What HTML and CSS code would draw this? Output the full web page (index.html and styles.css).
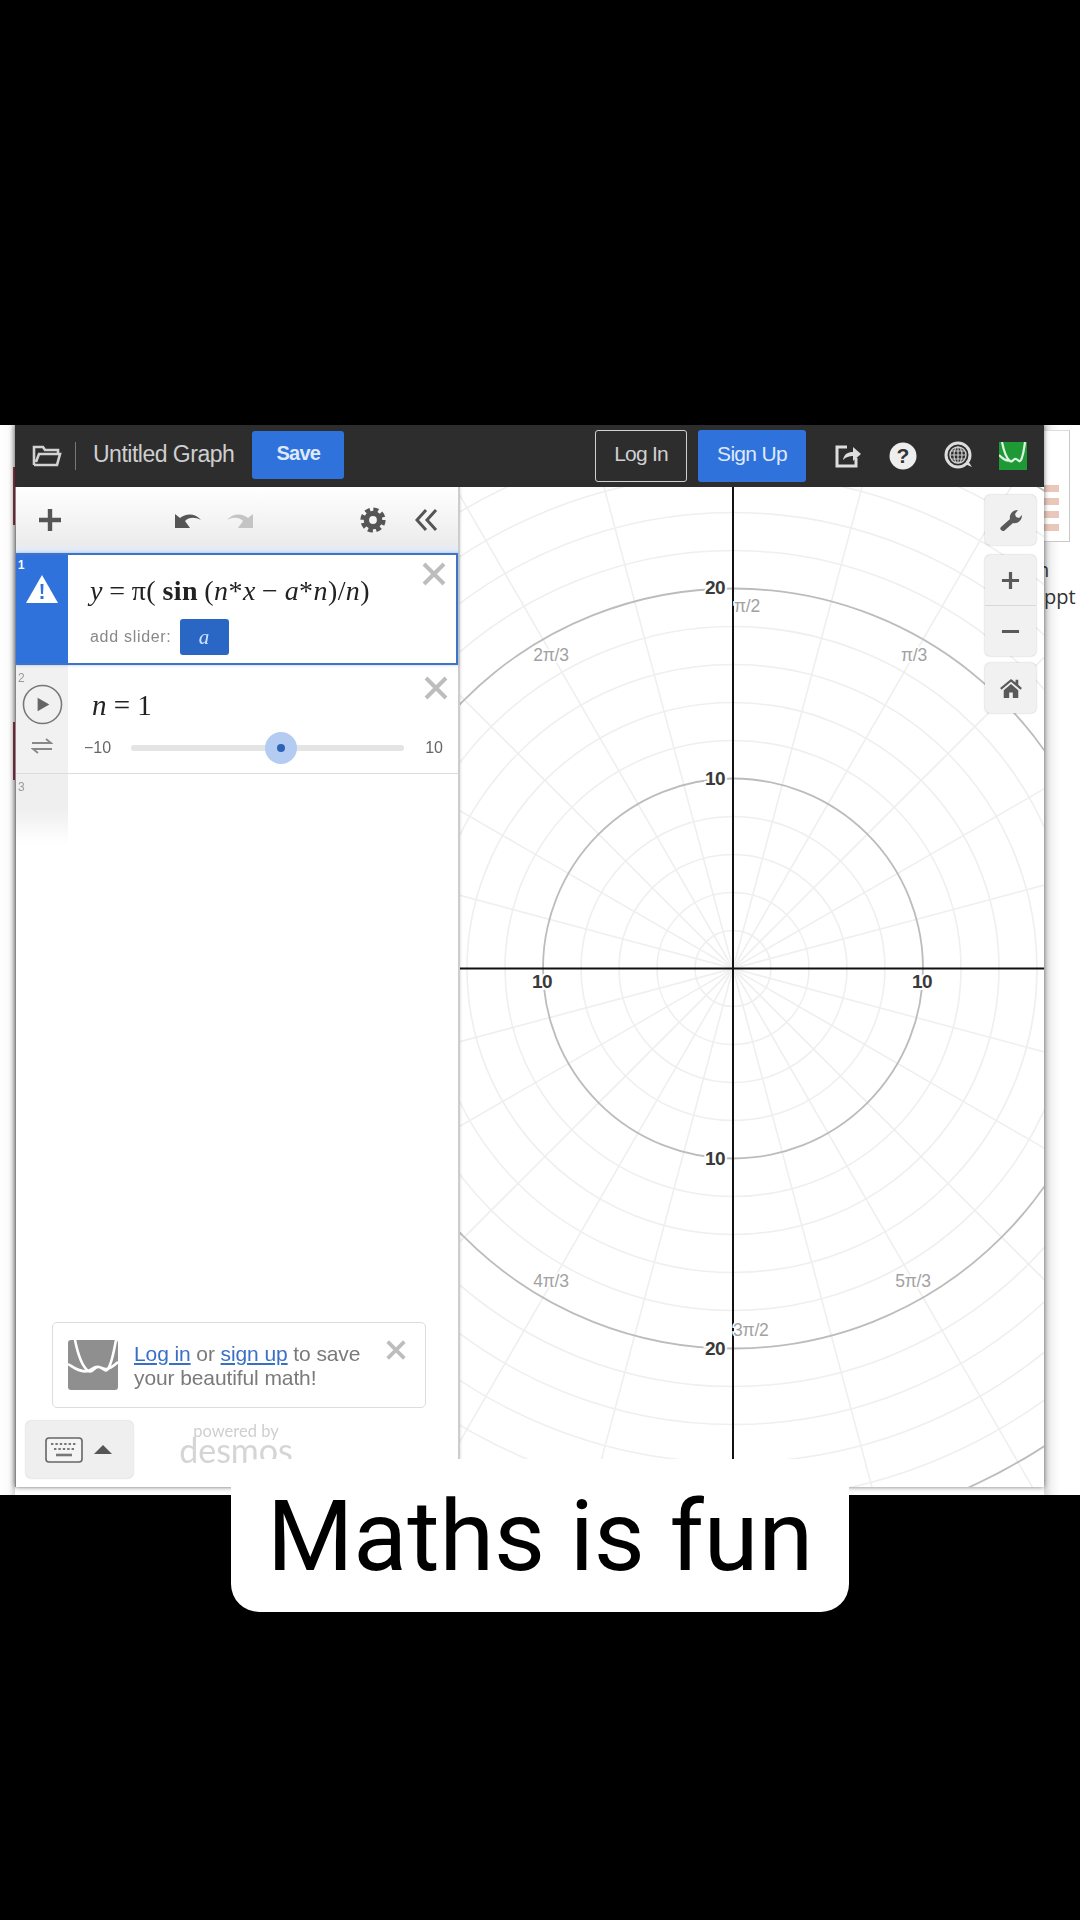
FILE: index.html
```html
<!DOCTYPE html>
<html lang="en">
<head>
<meta charset="utf-8">
<title>Maths is fun</title>
<link rel="stylesheet" href="styles.css">
</head>
<body>
<main class="screen">
  <div class="top-bar"></div>
  <section class="video">
    <div class="left-edge"><i class="tick tick-a"></i><i class="tick tick-b"></i></div>
    <div class="window">
      <header class="header">
        <svg class="ic-folder" viewBox="0 0 32 24"><path d="M3 21V3h9l2 3h13v4M3 21h23l3-11H8L5 18" fill="none" stroke="#d2d2d2" stroke-width="2.6"/></svg>
        <span class="sep"></span>
        <span class="title">Untitled Graph</span>
        <button class="btn btn-save">Save</button>
        <span class="grow"></span>
        <button class="btn btn-login">Log In</button>
        <button class="btn btn-signup">Sign Up</button>
        <svg class="ic-head ic-share" viewBox="0 0 28 26"><path d="M13 4H3v19h19v-8" fill="none" stroke="#ddd" stroke-width="3"/><path d="M9 17c1-6 5-8 10-8V4l8 7-8 7v-5c-4 0-7 1-10 4z" fill="#ddd"/></svg>
        <svg class="ic-head ic-help" viewBox="0 0 28 28"><circle cx="14" cy="14" r="13.5" fill="#eee"/><text x="14" y="21" text-anchor="middle" class="help-q">?</text></svg>
        <svg class="ic-head ic-globe" viewBox="0 0 30 30"><circle cx="14" cy="14" r="12" fill="none" stroke="#ddd" stroke-width="3"/><circle cx="14" cy="14" r="8" fill="none" stroke="#ccc" stroke-width="1.4"/><ellipse cx="14" cy="14" rx="4" ry="8" fill="none" stroke="#ccc" stroke-width="1.2"/><path d="M6 14h16M7 10h14M7 18h14M14 6v16" stroke="#ccc" stroke-width="1.2"/><path d="M21 23l7 3-4-6z" fill="#ddd"/></svg>
        <svg class="ic-head ic-logo" viewBox="0 0 28 28"><rect width="28" height="28" fill="#1d9a35"/><path d="M3 0c2 10 4 16 8 19 3 2 3-3 6-2 3 1 3 4 5 1 2-4 3-10 4-18M0 13c3 3 7 7 11 5" fill="none" stroke="#dff5e2" stroke-width="2.2"/></svg>
      </header>
      <div class="workspace">
        <aside class="panel">
          <div class="toolbar">
            <svg class="ic-plus" viewBox="0 0 24 24"><path d="M12 1v22M1 12h22" stroke="#555" stroke-width="4.4"/></svg>
            <svg class="ic-undo" viewBox="0 0 30 20"><path d="M2 18V4l5 4c6-5 15-5 21 2-6-3-12-3-16 1l5 7z" fill="#555"/></svg>
            <svg class="ic-undo ic-redo" viewBox="0 0 30 20"><path d="M28 18V4l-5 4C17 3 8 3 2 10c6-3 12-3 16 1l-5 7z" fill="#c4c4c4"/></svg>
            <span class="grow"></span>
            <svg class="ic-gear" viewBox="0 0 26 26"><circle cx="13" cy="13" r="6.6" fill="none" stroke="#555" stroke-width="5.4"/><circle cx="13" cy="13" r="10.6" fill="none" stroke="#555" stroke-width="4" stroke-dasharray="5 3.33"/></svg>
            <svg class="ic-collapse" viewBox="0 0 24 22"><path d="M11 1L2 11l9 10M21 1l-9 10 9 10" fill="none" stroke="#555" stroke-width="3"/></svg>
          </div>
          <div class="expr expr-active">
            <div class="gutter gutter-blue">
              <span class="num num-w">1</span>
              <svg class="ic-warn" viewBox="0 0 34 30"><path d="M17 1l16 28H1z" fill="#fff"/><path d="M15.5 10h3l-.5 10h-2zM15.500 22h3v3h-3z" fill="#2f72dc"/></svg>
            </div>
            <div class="expr-body">
              <div class="math math-1"><i>y</i> = π( <b>sin</b> (<i>n</i>*<i>x</i> − <i>a</i>*<i>n</i>)/<i>n</i>)</div>
              <div class="slider-hint"><span>add slider:</span><button class="add-a">a</button></div>
            </div>
            <svg class="ic-x" viewBox="0 0 24 24"><path d="M2 2l20 20M22 2L2 22" stroke="#bdbdbd" stroke-width="4"/></svg>
          </div>
          <div class="expr expr-slider">
            <div class="gutter">
              <span class="num">2</span>
              <svg class="ic-play" viewBox="0 0 42 42"><circle cx="21" cy="21" r="19.5" fill="none" stroke="#777" stroke-width="1.6"/><path d="M16 14l12 7-12 7z" fill="#666"/></svg>
              <svg class="ic-loop" viewBox="0 0 22 18"><path d="M1 6h19l-5-4M21 12H2l5 4" fill="none" stroke="#888" stroke-width="1.8"/></svg>
            </div>
            <div class="expr-body">
              <div class="math math-2"><i>n</i> = 1</div>
              <div class="slider-row">
                <span class="limit">−10</span>
                <div class="track"><span class="thumb"><span class="dot"></span></span></div>
                <span class="limit">10</span>
              </div>
            </div>
            <svg class="ic-x ic-x2" viewBox="0 0 24 24"><path d="M2 2l20 20M22 2L2 22" stroke="#bdbdbd" stroke-width="4"/></svg>
          </div>
          <div class="expr-empty">
            <div class="gutter gutter-fade"><span class="num">3</span></div>
          </div>
          <div class="banner">
            <svg class="ic-banner" viewBox="0 0 50 50"><rect width="50" height="50" rx="3" fill="#8f8f8f"/><path d="M7 0c3 15 7 26 13 31 5 3 6-5 11-4 5 1 6 6 9 2 4-6 6-18 8-29M0 24c5 3 12 9 20 7 5-2 6-5 11-4s7 6 19-5" fill="none" stroke="#fff" stroke-width="2.6"/></svg>
            <p class="banner-text"><a href="#">Log in</a> or <a href="#">sign up</a> to save<br>your beautiful math!</p>
            <svg class="ic-x ic-x3" viewBox="0 0 24 24"><path d="M2 2l20 20M22 2L2 22" stroke="#bdbdbd" stroke-width="4.4"/></svg>
          </div>
          <div class="footer">
            <div class="kbd-btn">
              <svg class="ic-kbd" viewBox="0 0 38 26"><rect x="1" y="1" width="36" height="24" rx="3" fill="#f4f4f4" stroke="#666" stroke-width="1.6"/><path d="M6 7h26M9 12h20" stroke="#777" stroke-width="2" stroke-dasharray="2.4 2"/><path d="M11 18h16" stroke="#777" stroke-width="2.6"/></svg>
              <span class="caret"></span>
            </div>
            <div class="powered"><span class="pw-top">powered by</span><span class="pw-name">desmos</span></div>
          </div>
        </aside>
        <div class="graph">
          <svg class="plane" viewBox="0 0 585 1000">
            <g class="minor">
              <circle cx="273" cy="481.5" r="38"/><circle cx="273" cy="481.5" r="76"/><circle cx="273" cy="481.5" r="114"/><circle cx="273" cy="481.5" r="152"/>
              <circle cx="273" cy="481.5" r="228"/><circle cx="273" cy="481.5" r="266"/><circle cx="273" cy="481.5" r="304"/><circle cx="273" cy="481.5" r="342"/>
              <circle cx="273" cy="481.5" r="418"/><circle cx="273" cy="481.5" r="456"/><circle cx="273" cy="481.5" r="494"/><circle cx="273" cy="481.5" r="532"/>
              <circle cx="273" cy="481.5" r="608"/><circle cx="273" cy="481.5" r="646"/>
              <g class="spokes">
                <line x1="-500" y1="481.5" x2="1046" y2="481.5" transform="rotate(15 273 481.5)"/>
                <line x1="-500" y1="481.5" x2="1046" y2="481.5" transform="rotate(30 273 481.5)"/>
                <line x1="-500" y1="481.5" x2="1046" y2="481.5" transform="rotate(45 273 481.5)"/>
                <line x1="-500" y1="481.5" x2="1046" y2="481.5" transform="rotate(60 273 481.5)"/>
                <line x1="-500" y1="481.5" x2="1046" y2="481.5" transform="rotate(75 273 481.5)"/>
                <line x1="-500" y1="481.5" x2="1046" y2="481.5" transform="rotate(105 273 481.5)"/>
                <line x1="-500" y1="481.5" x2="1046" y2="481.5" transform="rotate(120 273 481.5)"/>
                <line x1="-500" y1="481.5" x2="1046" y2="481.5" transform="rotate(135 273 481.5)"/>
                <line x1="-500" y1="481.5" x2="1046" y2="481.5" transform="rotate(150 273 481.5)"/>
                <line x1="-500" y1="481.5" x2="1046" y2="481.5" transform="rotate(165 273 481.5)"/>
              </g>
            </g>
            <g class="major">
              <circle cx="273" cy="481.5" r="190"/><circle cx="273" cy="481.5" r="380"/><circle cx="273" cy="481.5" r="570"/>
            </g>
            <path class="axis" d="M0 481.5H585M273 0V1000"/>
            <g class="nums">
              <text x="255" y="107" text-anchor="middle">20</text>
              <text x="255" y="298" text-anchor="middle">10</text>
              <text x="82" y="501" text-anchor="middle">10</text>
              <text x="462" y="501" text-anchor="middle">10</text>
              <text x="255" y="678" text-anchor="middle">10</text>
              <text x="255" y="868" text-anchor="middle">20</text>
            </g>
            <g class="angles">
              <text x="274" y="125">π/2</text>
              <text x="91" y="174" text-anchor="middle">2π/3</text>
              <text x="454" y="174" text-anchor="middle">π/3</text>
              <text x="91" y="800" text-anchor="middle">4π/3</text>
              <text x="453" y="800" text-anchor="middle">5π/3</text>
              <text x="273" y="849">3π/2</text>
            </g>
          </svg>
          <div class="graph-tools">
            <div class="tool tool-single"><svg class="ic-wrench" viewBox="0 0 24 24"><path d="M2 22c-1-1-1-2 0-3l9-8c-1-4 2-9 8-9l-3 4 1 3 3 1 3-3c0 6-5 9-9 8l-9 8c-1 0-2 0-3-1z" fill="#5a5a5a"/></svg></div>
            <div class="tool-group">
              <div class="tool tool-half"><svg class="ic-zoom" viewBox="0 0 20 20"><path d="M10 1v18M1 10h18" stroke="#5a5a5a" stroke-width="3.4"/></svg></div>
              <div class="tool tool-half"><svg class="ic-zoom" viewBox="0 0 20 20"><path d="M1 10h18" stroke="#5a5a5a" stroke-width="3.4"/></svg></div>
            </div>
            <div class="tool tool-single"><svg class="ic-home" viewBox="0 0 24 22"><path d="M12 1L0 11l1.500 2L12 4l10.500 9L24 11l-4-3.500V2h-3v3zM4 13.500V22h6v-6h4v6h6v-8.500L12 6.500z" fill="#5a5a5a"/></svg></div>
          </div>
        </div>
      </div>
    </div>
    <div class="beyond">
      <div class="paper"><i></i><i></i><i></i><i></i></div>
      <p class="beyond-text"><span class="clip-n">n</span><br>ppt</p>
    </div>
  </section>
  <div class="bottom-bar"></div>
</main>
<div class="caption">Maths is fun</div>
</body>
</html>
```

FILE: styles.css
```css
* { box-sizing: border-box; }
html, body { margin: 0; padding: 0; }
body { width: 1080px; height: 1920px; background: #000; overflow: hidden; position: relative; font-family: "Liberation Sans", Arial, sans-serif; }
.screen { display: flex; flex-direction: column; height: 1920px; }
.top-bar { height: 425px; background: #000; }
.bottom-bar { flex: 1; background: #000; }
.video { height: 1070px; display: flex; background: #fff; align-items: flex-start; }

.left-edge { width: 15px; height: 1070px; position: relative; background: linear-gradient(90deg, #fff 0, #fafafa 60%, #d8d8d8 100%); }
.tick { position: absolute; right: 0; width: 2px; background: #8a2f45; }
.tick-a { top: 42px; height: 58px; }
.tick-b { top: 297px; height: 58px; }

.window { width: 1029px; height: 1062px; display: flex; flex-direction: column; background: #fff; box-shadow: 0 0 5px rgba(0,0,0,.55); filter: blur(.5px); position: relative; z-index: 1; }
.grow { flex: 1; }

.header { height: 62px; background: #2d2d2d; display: flex; align-items: center; padding: 0 17px 0 16px; flex: none; }
.ic-folder { width: 32px; height: 24px; margin-left: 0; }
.sep { width: 1px; height: 28px; background: #777; margin: 0 17px 0 12px; }
.title { color: #cfcfcf; font-size: 23px; letter-spacing: -.5px; margin: -4px 18px 0 0; }
.btn { font-family: inherit; border: 0; color: #fff; font-size: 21px; letter-spacing: -.5px; padding: 0 0 4px; border-radius: 3px; font-weight: 400; }
.btn-save { width: 92px; height: 48px; margin-top: -3px; padding: 0 0 2px; background: #2f72dc; font-weight: 700; color: #dfe9fb; font-size: 20px; letter-spacing: -.8px; }
.btn-login { width: 92px; height: 52px; background: transparent; border: 1.5px solid #cfcfcf; color: #d0d0d0; margin-right: 11px; letter-spacing: -.8px; }
.btn-signup { width: 108px; height: 52px; background: #2f72dc; color: #dfe9fb; margin-right: 28px; letter-spacing: -.7px; }
.ic-head { flex: none; }
.ic-share { width: 28px; height: 26px; margin-right: 27px; }
.ic-help { width: 28px; height: 28px; margin-right: 27px; }
.help-q { font: 700 21px "Liberation Sans", sans-serif; fill: #333; }
.ic-globe { width: 30px; height: 30px; margin-right: 25px; }
.ic-logo { width: 28px; height: 28px; }

.workspace { flex: 1; display: flex; min-height: 0; }
.panel { width: 445px; flex: none; display: flex; flex-direction: column; border-right: 2px solid #cdcdcd; box-shadow: 1px 0 2px rgba(0,0,0,.1); border-left: 1px solid #888; background: #fff; position: relative; z-index: 2; }

.toolbar { height: 66px; flex: none; display: flex; align-items: center; padding: 0 19px 0 22px; background: linear-gradient(#fff 0, #ececec 85%, #dfeafa 100%); }
.ic-plus { width: 24px; height: 24px; margin-right: 111px; }
.ic-undo { width: 30px; height: 20px; margin-right: 22px; }
.ic-redo { margin-right: 0; }
.ic-gear { width: 26px; height: 26px; margin-right: 29px; }
.ic-collapse { width: 24px; height: 22px; }

.expr { display: flex; position: relative; flex: none; }
.expr-active { height: 112px; border: 2px solid #3f74c4; border-left: 0; box-shadow: 0 0 3px rgba(47,114,220,.4); z-index: 1; }
.expr-slider { height: 109px; border-bottom: 1px solid #dcdcdc; }
.gutter { width: 52px; flex: none; background: #f1f1f1; position: relative; display: flex; flex-direction: column; align-items: center; }
.gutter-blue { background: #2f72dc; }
.gutter-fade { height: 70px; background: linear-gradient(#efefef 50%, #fff); }
.num { position: absolute; left: 2px; top: 6px; font-size: 12px; color: #999; }
.num-w { color: #fff; font-weight: 700; top: 3px; }
.ic-warn { width: 34px; height: 30px; margin-top: 19px; }
.ic-play { width: 41px; height: 41px; margin-top: 19px; flex: none; }
.ic-loop { width: 22px; height: 18px; margin-top: 12px; flex: none; }
.expr-body { flex: 1; min-width: 0; padding-left: 22px; display: flex; flex-direction: column; }
.math { font-family: "Liberation Serif", "Times New Roman", serif; color: #222; font-size: 28px; }
.math b { font-weight: 700; }
.math-1 { margin-top: 20px; height: 44px; white-space: nowrap; letter-spacing: .4px; word-spacing: -1px; }
.math-2 { margin-top: 24px; margin-left: 2px; height: 44px; font-size: 29px; }
.slider-hint { display: flex; align-items: center; font-size: 16px; letter-spacing: .7px; color: #888; }
.add-a { width: 49px; height: 36px; margin-left: 8px; padding: 0; border: 0; border-radius: 3px; background: #2a66c4; color: #cfe3ff; font: italic 21px "Liberation Serif", serif; }
.ic-x { position: absolute; width: 24px; height: 24px; right: 10px; top: 7px; }
.ic-x2 { top: 11px; }

.slider-row { display: flex; align-items: center; margin-left: -6px; margin-top: 6px; gap: 0; }
.limit { font-size: 16px; color: #666; width: 30px; }
.limit:last-child { text-align: right; width: 27px; margin-left: 12px; margin-right: 14px; }
.track { width: 273px; height: 6px; margin-left: 17px; background: #e4e4e4; border-radius: 3px; position: relative; }
.thumb { position: absolute; left: 134px; top: -13px; width: 32px; height: 32px; border-radius: 50%; background: #b4ccf1; display: flex; align-items: center; justify-content: center; }
.dot { width: 8px; height: 8px; border-radius: 50%; background: #2c62b8; }

.expr-empty { flex: none; height: 70px; }
.banner { margin: auto 0 0 36px; width: 374px; height: 86px; border: 1.5px solid #ddd; border-radius: 5px; display: flex; align-items: center; padding: 0 12px 0 15px; position: relative; flex: none; }
.ic-banner { width: 50px; height: 50px; flex: none; margin-right: 16px; }
.banner-text { margin: 0; font-size: 21px; line-height: 24px; color: #7a7a7a; letter-spacing: -.1px; white-space: nowrap; padding-top: 2px; }
.banner-text a { color: #3a6fc8; }
.ic-x3 { width: 20px; height: 20px; right: 19px; top: 17px; }

.footer { height: 79px; flex: none; display: flex; align-items: flex-start; padding: 13px 0 0 10px; }
.kbd-btn { width: 107px; height: 57px; background: #efefef; border-radius: 5px; box-shadow: 0 0 2px rgba(0,0,0,.3); display: flex; align-items: center; padding-left: 19px; }
.ic-kbd { width: 38px; height: 26px; margin-right: 11px; }
.caret { width: 0; height: 0; border: 9px solid transparent; border-top: 0; border-bottom: 9px solid #555; }
.powered { margin-left: 48px; display: flex; flex-direction: column; align-items: center; width: 110px; font-family: "Lato", sans-serif; color: #d5d5d5; }
.pw-top { font-size: 16.500px; line-height: 18px; margin-top: 1px; color: #cfcfcf; }
.pw-name { font-size: 34px; line-height: 34px; margin-top: -7px; }

.graph { flex: 1; position: relative; overflow: hidden; background: #fff; }
.plane { width: 585px; height: 1000px; display: block; }
.plane circle { fill: none; }
.minor { stroke: #efefef; stroke-width: 1.6; }
.major { stroke: #bcbcbc; stroke-width: 1.8; }
.axis { stroke: #111; stroke-width: 2; fill: none; }
.nums text { font: 700 19px "Liberation Sans", sans-serif; fill: #3a3a3a; letter-spacing: -.6px; paint-order: stroke; stroke: #fff; stroke-width: 4px; }
.angles text { font: 17.500px "Liberation Sans", sans-serif; fill: #a2a2a2; letter-spacing: -.2px; paint-order: stroke; stroke: #fff; stroke-width: 3px; }

.graph-tools { position: absolute; top: 8px; right: 8px; width: 51px; display: flex; flex-direction: column; gap: 10px; }
.tool { background: #f1f1f1; display: flex; align-items: center; justify-content: center; }
.tool-single { height: 50px; border-radius: 5px; box-shadow: 0 0 2px rgba(0,0,0,.3); }
.tool-group { border-radius: 5px; overflow: hidden; box-shadow: 0 0 2px rgba(0,0,0,.3); display: flex; flex-direction: column; gap: 1px; background: #d8d8d8; margin-bottom: -3px; }
.tool-half { height: 50px; }
.ic-wrench { width: 24px; height: 24px; }
.ic-zoom { width: 19px; height: 19px; }
.ic-home { width: 22px; height: 20px; }

.beyond { flex: 1; min-width: 0; height: 1070px; position: relative; overflow: hidden; background: linear-gradient(90deg, #d8d8d8 0, #f4f4f4 8px, #fff 16px); }
.paper { width: 26px; height: 112px; margin: 5px 0 0 0; border: 1px solid #c8c8c8; border-left: 0; border-top-color: #ddd; background: #fff; display: flex; flex-direction: column; justify-content: flex-end; gap: 6px; padding-bottom: 10px; }
.paper i { display: block; width: 15px; height: 7px; background: #e9c7bb; }
.beyond-text { margin: 14px 0 0 0; font: 20px/27px "Open Sans", sans-serif; color: #333; }
.clip-n { display: inline-block; margin-left: -7px; }

.caption { position: absolute; left: 231px; top: 1459px; width: 618px; height: 153px; background: #fff; border-radius: 28px; z-index: 5; display: flex; align-items: flex-end; justify-content: center; padding-bottom: 16px; color: #000; font-family: "Roboto", "Noto Sans", sans-serif; font-size: 99px; line-height: 120px; white-space: nowrap; }
```
